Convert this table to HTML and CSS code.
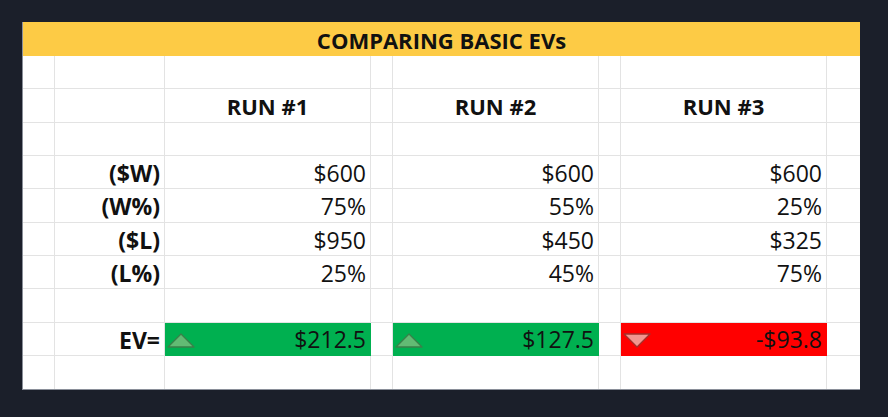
FILE: index.html
```html
<!DOCTYPE html>
<html lang="en">
<head>
<meta charset="utf-8">
<title>Comparing Basic EVs</title>
<link rel="stylesheet" href="styles.css">
</head>
<body>
<div class="page">
  <div class="sheet">
    <div class="title">COMPARING BASIC EVs</div>
    <div class="grid">
      <!-- row 1 -->
      <div class="c"></div><div class="c"></div><div class="c"></div><div class="c"></div><div class="c"></div><div class="c"></div><div class="c"></div><div class="c last"></div>
      <!-- row 2 -->
      <div class="c"></div><div class="c"></div><div class="c head">RUN #1</div><div class="c"></div><div class="c head">RUN #2</div><div class="c"></div><div class="c head">RUN #3</div><div class="c last"></div>
      <!-- row 3 -->
      <div class="c"></div><div class="c"></div><div class="c"></div><div class="c"></div><div class="c"></div><div class="c"></div><div class="c"></div><div class="c last"></div>
      <!-- row 4 -->
      <div class="c"></div><div class="c label">($W)</div><div class="c num">$600</div><div class="c"></div><div class="c num">$600</div><div class="c"></div><div class="c num">$600</div><div class="c last"></div>
      <!-- row 5 -->
      <div class="c"></div><div class="c label">(W%)</div><div class="c num">75%</div><div class="c"></div><div class="c num">55%</div><div class="c"></div><div class="c num">25%</div><div class="c last"></div>
      <!-- row 6 -->
      <div class="c"></div><div class="c label">($L)</div><div class="c num">$950</div><div class="c"></div><div class="c num">$450</div><div class="c"></div><div class="c num">$325</div><div class="c last"></div>
      <!-- row 7 -->
      <div class="c"></div><div class="c label">(L%)</div><div class="c num">25%</div><div class="c"></div><div class="c num">45%</div><div class="c"></div><div class="c num">75%</div><div class="c last"></div>
      <!-- row 8 -->
      <div class="c"></div><div class="c"></div><div class="c"></div><div class="c"></div><div class="c"></div><div class="c"></div><div class="c"></div><div class="c last"></div>
      <!-- row 9 -->
      <div class="c"></div><div class="c label">EV=</div>
      <div class="c num ev up"><svg class="tri" viewBox="0 0 28 15" width="28" height="15"><polygon points="1,14 14,1 27,14" /></svg><span>$212.5</span></div>
      <div class="c"></div>
      <div class="c num ev up"><svg class="tri" viewBox="0 0 28 15" width="28" height="15"><polygon points="1,14 14,1 27,14" /></svg><span>$127.5</span></div>
      <div class="c"></div>
      <div class="c num ev down"><svg class="tri" viewBox="0 0 28 15" width="28" height="15"><polygon points="1,1 27,1 14,14" /></svg><span>-$93.8</span></div>
      <div class="c last"></div>
      <!-- row 10 -->
      <div class="c bot"></div><div class="c bot"></div><div class="c bot"></div><div class="c bot"></div><div class="c bot"></div><div class="c bot"></div><div class="c bot"></div><div class="c bot last"></div>
    </div>
  </div>
</div>
</body>
</html>
```

FILE: styles.css
```css
* { box-sizing: border-box; }

html, body {
  margin: 0;
  padding: 0;
  background: #1b1f2a;
}

body {
  font-family: "Open Sans", "Liberation Sans", sans-serif;
  color: #111;
}

.page {
  padding: 22px 0 0 22px;
  height: 417px;
}

.sheet {
  width: 838px;
  background: #ffffff;
  border-left: 1px solid #8a8f99;
  border-bottom: 1px solid #8a8f99;
}

.title {
  height: 34px;
  background: #fdcb45;
  font-weight: 700;
  font-size: 22px;
  line-height: 36px;
  text-align: center;
  color: #111;
}

.grid {
  display: grid;
  grid-template-columns: 32px 110px 206px 22px 206px 22px 206px 33px;
  grid-template-rows: 33px 34px 33px 33px 34px 33px 33px 34px 33px 33px;
}

.c {
  border-right: 1px solid #e3e3e3;
  border-bottom: 1px solid #e3e3e3;
  font-size: 23px;
  line-height: 34px;
  white-space: nowrap;
  overflow: hidden;
}

.c.last { border-right: none; }
.c.bot { border-bottom: none; }

.head {
  font-weight: 700;
  font-size: 22px;
  text-align: center;
}

.label {
  font-weight: 700;
  text-align: right;
  padding-right: 4px;
}

.num {
  text-align: right;
  padding-right: 4px;
}

.ev {
  display: flex;
  align-items: center;
  justify-content: space-between;
  padding-left: 2px;
}

.ev span { line-height: 34px; }

.up {
  background: #00b050;
  border-color: #00b050;
}

.down {
  background: #ff0000;
  border-color: #ff0000;
}

.tri {
  display: block;
  flex-shrink: 0;
  width: 28px;
  height: 15px;
  margin-top: 3px;
}

.up .tri polygon {
  fill: #62bb74;
  stroke: #3a8049;
  stroke-width: 1.3;
  stroke-linejoin: round;
}

.down .tri polygon {
  fill: #f2968f;
  stroke: #a3302a;
  stroke-width: 1.3;
  stroke-linejoin: round;
}
```
